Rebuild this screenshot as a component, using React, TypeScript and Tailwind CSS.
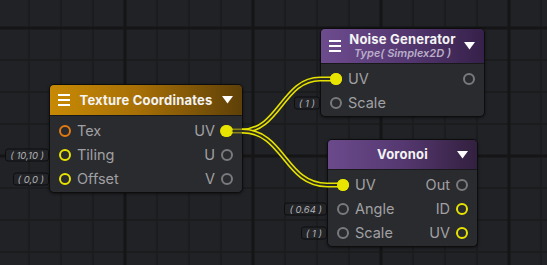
import React from "react";

type PortKind = "filled" | "yellow" | "grey" | "orange";

function Port({ kind }: { kind: PortKind }) {
  if (kind === "filled")
    return <span className="block w-[12px] h-[12px] rounded-full bg-[#e8e400] shrink-0" />;
  const c =
    kind === "yellow"
      ? "border-[#e8e400]"
      : kind === "orange"
      ? "border-[#e27a12]"
      : "border-[#7a7a7c]";
  return <span className={`block w-[12px] h-[12px] rounded-full border-2 ${c} shrink-0`} />;
}

type Row = {
  left?: { label: string; kind: PortKind; badge?: string };
  right?: { label: string; kind: PortKind };
};

function Hamburger({ hidden }: { hidden?: boolean }) {
  return (
    <div className={`flex flex-col gap-[3px] w-[12px] shrink-0 ${hidden ? "invisible" : ""}`}>
      <span className="block h-[2px] bg-white" />
      <span className="block h-[2px] bg-white" />
      <span className="block h-[2px] bg-white" />
    </div>
  );
}

function Triangle() {
  return (
    <svg width="11" height="8" viewBox="0 0 11 8" className="shrink-0">
      <path d="M0 0 L11 0 L5.5 7.5 Z" fill="#ffffff" />
    </svg>
  );
}

function Node({
  className,
  headerClass,
  title,
  subtitle,
  rows,
  noMenu,
}: {
  className: string;
  headerClass: string;
  title: string;
  subtitle?: string;
  rows: Row[];
  noMenu?: boolean;
}) {
  return (
    <div
      className={`absolute rounded-[5px] border border-[#0d0d0e] bg-[#2a2b2e] shadow-[0_1px_3px_rgba(0,0,0,0.5)] ${className}`}
    >
      <div
        className={`flex items-center pl-[8px] pr-[9px] rounded-t-[4px] border-b border-[#19191b] ${headerClass}`}
      >
        <Hamburger hidden={noMenu} />
        <div className="flex-1 flex flex-col items-center leading-none">
          <span className="text-[13px] font-bold text-[#f4f4f4] tracking-[0.2px]">{title}</span>
          {subtitle && (
            <span className="text-[11px] italic font-semibold text-[#b9aec9] mt-[2px]">{subtitle}</span>
          )}
        </div>
        <Triangle />
      </div>
      <div className="pt-[3px] pb-[1px]">
        {rows.map((r, i) => (
          <div key={i} className="relative flex items-center justify-between h-[24px] px-[9px]">
            <div className="flex items-center gap-[6px]">
              {r.left && (
                <>
                  <Port kind={r.left.kind} />
                  <span className="text-[14.5px] text-[#a0a0a3] leading-none">{r.left.label}</span>
                </>
              )}
            </div>
            <div className="flex items-center gap-[6px]">
              {r.right && (
                <>
                  {r.right.label && (
                    <span className="text-[14.5px] text-[#a0a0a3] leading-none">{r.right.label}</span>
                  )}
                  <Port kind={r.right.kind} />
                </>
              )}
            </div>
            {r.left?.badge && (
              <div className="absolute right-[calc(100%+1px)] top-1/2 -translate-y-1/2 h-[13px] px-[4px] flex items-center rounded-[3px] border border-[#0d0d0e] bg-[#232427] text-[9.5px] italic text-[#b4b4b8] whitespace-nowrap leading-none">
                {r.left.badge}
              </div>
            )}
          </div>
        ))}
      </div>
    </div>
  );
}

function Wire({ d, dim }: { d: string; dim?: boolean }) {
  return (
    <g opacity={dim ? 0.5 : 1}>
      <path d={d} fill="none" stroke="#e6e200" strokeWidth={5} />
      <path d={d} fill="none" stroke="#2c2c22" strokeWidth={1.8} />
    </g>
  );
}

export default function App() {
  const minorX: number[] = [];
  for (let x = -3; x < 560; x += 32) minorX.push(x);
  const minorY: number[] = [];
  for (let y = -4; y < 280; y += 32) minorY.push(y);
  const majorX = [-3, 125, 253, 381, 509];
  const majorY = [28, 156];

  return (
    <div className="relative w-[547px] h-[265px] overflow-hidden bg-[#212226] font-['Inter',sans-serif]">
      <svg className="absolute inset-0" width="547" height="265">
        {minorX.map((x) => (
          <rect key={"mx" + x} x={x - 1} y={0} width={2} height={265} fill="#1b1c1e" />
        ))}
        {minorY.map((y) => (
          <rect key={"my" + y} x={0} y={y - 1} width={547} height={2} fill="#1b1c1e" />
        ))}
        {majorX.map((x) => (
          <rect key={"Mx" + x} x={x - 1.5} y={0} width={3} height={265} fill="#151516" />
        ))}
        {majorY.map((y) => (
          <rect key={"My" + y} x={0} y={y - 1.5} width={547} height={3} fill="#151516" />
        ))}
      </svg>

      <Node
        className="left-[49px] top-[84px] w-[194px]"
        headerClass="h-[31px] bg-[linear-gradient(90deg,#c88a04_0%,#a87006_45%,#5e4008_100%)]"
        title="Texture Coordinates"
        rows={[
          { left: { label: "Tex", kind: "orange" }, right: { label: "UV", kind: "filled" } },
          { left: { label: "Tiling", kind: "yellow", badge: "( 10,10 )" }, right: { label: "U", kind: "grey" } },
          { left: { label: "Offset", kind: "yellow", badge: "( 0,0 )" }, right: { label: "V", kind: "grey" } },
        ]}
      />

      <Node
        className="left-[320px] top-[28px] w-[165px]"
        headerClass="h-[35px] bg-[linear-gradient(90deg,#6d4c8e_0%,#553872_50%,#36214a_100%)]"
        title="Noise Generator"
        subtitle="Type( Simplex2D )"
        rows={[
          { left: { label: "UV", kind: "filled" }, right: { label: "", kind: "grey" } },
          { left: { label: "Scale", kind: "grey", badge: "( 1 )" } },
        ]}
      />

      <Node
        className="left-[327px] top-[139px] w-[151px]"
        headerClass="h-[30px] bg-[linear-gradient(90deg,#6b4a8c_0%,#553870_50%,#33203f_100%)]"
        title="Voronoi"
        noMenu
        rows={[
          { left: { label: "UV", kind: "filled" }, right: { label: "Out", kind: "grey" } },
          { left: { label: "Angle", kind: "grey", badge: "( 0.64 )" }, right: { label: "ID", kind: "yellow" } },
          { left: { label: "Scale", kind: "grey", badge: "( 1 )" }, right: { label: "UV", kind: "yellow" } },
        ]}
      />

      <svg className="absolute inset-0 pointer-events-none" width="547" height="265">
        <Wire d="M231 131 L243 131" dim />
        <Wire d="M242 131 C279 131 283 79 320 79 L331 79" />
        <Wire d="M242 131 C284 131 285 185 327 185 L338 185" />
      </svg>
      <div className="absolute left-[330px] top-[73px] w-[12px] h-[12px] rounded-full bg-[#e8e400]" />
      <div className="absolute left-[337px] top-[179px] w-[12px] h-[12px] rounded-full bg-[#e8e400]" />
      <div className="absolute left-[220px] top-[125px] w-[12px] h-[12px] rounded-full bg-[#e8e400]" />
    </div>
  );
}
